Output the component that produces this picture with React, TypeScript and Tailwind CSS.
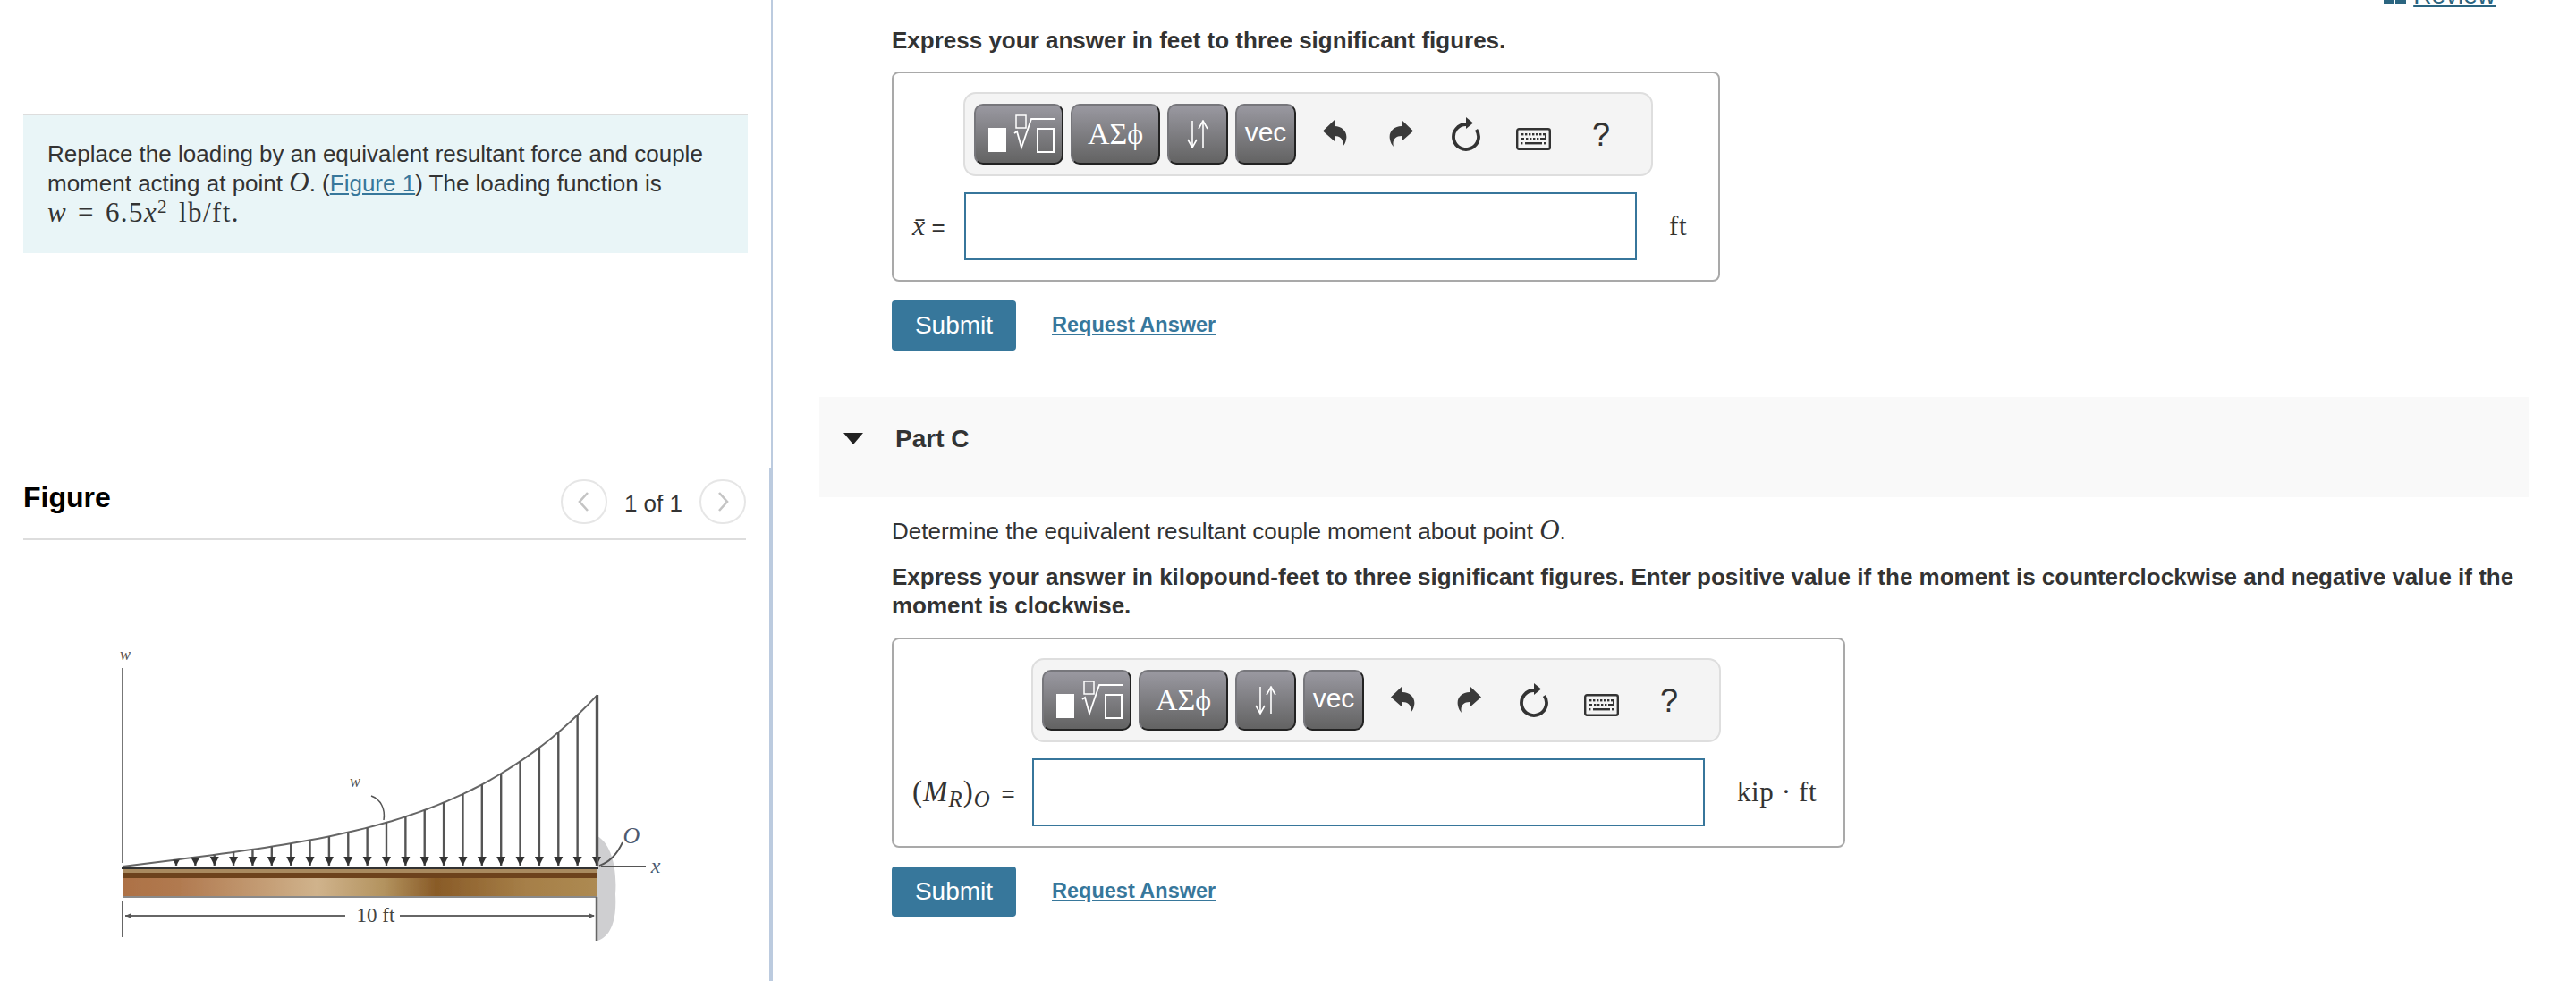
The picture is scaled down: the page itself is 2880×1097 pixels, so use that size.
const ARROW_XS = Array.from({ length: 23 }, (_, i) => 197 + i * (470 / 22));

const curveY = (x: number) => {
  const f = (x - 137) / 531;
  return 969 - 192 * (0.35 * f + 0.65 * Math.pow(f, 4));
};

const CURVE = Array.from({ length: 54 }, (_, i) => {
  const x = 137 + i * (531 / 53);
  return `${x.toFixed(1)},${curveY(x).toFixed(1)}`;
}).join(" ");

function BeamFigure() {
  return (
    <svg width="860" height="493" viewBox="0 604 860 493" className="block">
      <defs>
        <filter id="soft">
          <feGaussianBlur stdDeviation="0.7" />
        </filter>
        <linearGradient id="beam" x1="0" x2="1" y1="0" y2="0">
          <stop offset="0" stopColor="#ad7145" />
          <stop offset="0.12" stopColor="#b17a50" />
          <stop offset="0.41" stopColor="#d0b38c" />
          <stop offset="0.55" stopColor="#b3935f" />
          <stop offset="0.66" stopColor="#895b27" />
          <stop offset="0.85" stopColor="#a67f48" />
          <stop offset="1" stopColor="#ad8a52" />
        </linearGradient>
      </defs>
      <g filter="url(#soft)">
        {/* wall */}
        <path d="M668,935 C685,945 690,975 688,1000 C690,1030 682,1048 668,1052 Z" fill="#cfcfd1" />
        {/* beam */}
        <rect x="137" y="972" width="531" height="31" fill="url(#beam)" />
        <rect x="137" y="972" width="531" height="4" fill="#a98a5e" />
        <rect x="137" y="976" width="531" height="6" fill="#6d421a" />
        <rect x="137" y="1002" width="531" height="2" fill="#8a8a8a" />
        <rect x="136" y="969" width="533" height="3" fill="#333333" />
        {/* load */}
        <polyline points={CURVE} fill="none" stroke="#666666" strokeWidth="2" />
        {ARROW_XS.map((x) => {
          const top = curveY(x);
          const headTop = Math.max(958, top);
          const half = Math.min(5, (969 - headTop) / 2);
          return (
            <g key={x}>
              <line x1={x} x2={x} y1={top} y2={968} stroke="#555555" strokeWidth="2.4" />
              <polygon points={`${x - half},${headTop} ${x + half},${headTop} ${x},968`} fill="#333333" />
            </g>
          );
        })}
        <line x1="668" x2="668" y1="777" y2="968" stroke="#555555" strokeWidth="2.4" />
        {/* axes and dimension */}
        <line x1="137" x2="137" y1="747" y2="965" stroke="#777777" strokeWidth="2" />
        <line x1="672" x2="722" y1="969" y2="969" stroke="#555555" strokeWidth="2" />
        <line x1="667" x2="667" y1="1003" y2="1052" stroke="#666666" strokeWidth="2.5" />
        <line x1="137" x2="137" y1="1008" y2="1048" stroke="#666666" strokeWidth="2" />
        <line x1="140" x2="386" y1="1024" y2="1024" stroke="#666666" strokeWidth="2" />
        <line x1="447" x2="664" y1="1024" y2="1024" stroke="#666666" strokeWidth="2" />
        <polygon points="140,1024 147,1021 147,1027" fill="#555555" />
        <polygon points="665,1024 658,1021 658,1027" fill="#555555" />
        <path d="M415,890 C426,894 431,905 429,917" fill="none" stroke="#555555" strokeWidth="1.5" />
        <path d="M670,968 C682,964 690,955 696,942" fill="none" stroke="#555555" strokeWidth="1.8" />
      </g>
      <g fontFamily="'Liberation Serif', serif" fill="#555555">
        <text x="140" y="738" fontSize="18" fontStyle="italic" textAnchor="middle">w</text>
        <text x="397" y="880" fontSize="18" fontStyle="italic" textAnchor="middle">w</text>
        <text x="706" y="943" fontSize="26" fontStyle="italic" textAnchor="middle" fill="#4d5a70">O</text>
        <text x="733" y="976" fontSize="24" fontStyle="italic" textAnchor="middle" fill="#4d5a70">x</text>
        <text x="420" y="1031" fontSize="23" textAnchor="middle" fill="#444444">10 ft</text>
      </g>
    </svg>
  );
}

function ToolButton({ className, children }: { className: string; children: React.ReactNode }) {
  return (
    <div
      className={`${className} h-[68px] flex items-center justify-center rounded-[10px] border-2 border-[#77777c] border-r-[#222222] border-b-[#222222] bg-gradient-to-b from-[#9a99a1] to-[#636363] text-white`}
    >
      {children}
    </div>
  );
}

function TemplateGlyph() {
  return (
    <svg width="96" height="64" viewBox="2 2 96 64">
      <rect x="16" y="27" width="20" height="27" fill="#ffffff" />
      <rect x="47" y="13" width="11" height="14" fill="none" stroke="#ffffff" strokeWidth="1.5" />
      <path d="M45,33 L48,31 L53,49 L64,17 L90,17" fill="none" stroke="#ffffff" strokeWidth="1.8" />
      <rect x="71" y="28" width="18" height="26" fill="none" stroke="#ffffff" strokeWidth="2" />
    </svg>
  );
}

function UpDownGlyph() {
  return (
    <svg width="32" height="32" viewBox="0 0 32 32">
      <path d="M10,1 L10,30 M5,22 L10,31 L15,22" fill="none" stroke="#ffffff" strokeWidth="1.6" />
      <path d="M22,31 L22,2 M17,10 L22,1 L27,10" fill="none" stroke="#ffffff" strokeWidth="1.6" />
    </svg>
  );
}

function UndoIcon({ flip }: { flip?: boolean }) {
  return (
    <svg width="27" height="30" viewBox="0 0 27 30" className={flip ? "-scale-x-100 -mt-[2px]" : "-mt-[2px]"}>
      <path d="M0,12.5 L13,0 L13,7 C22,7 28,14 26,22 C25.5,25 24,28 22,30 C24,23 20,18 13,18 L13,24 Z" fill="#3a3a3a" />
    </svg>
  );
}

function ResetIcon() {
  return (
    <svg width="34" height="38" viewBox="0 0 34 38">
      <path d="M16,8 A14,14 0 1 0 27.5,14" fill="none" stroke="#333333" strokeWidth="3.8" />
      <polygon points="16,0 24,6.5 16,13" fill="#333333" />
    </svg>
  );
}

function KeyboardIcon() {
  const topRow = [6, 10, 14, 18, 22, 26, 30];
  const midRow = [11, 15, 19, 23];
  return (
    <svg width="39" height="25" viewBox="0 0 39 25" className="mt-[10px]">
      <rect x="1.2" y="1.2" width="36.6" height="22.6" rx="2" fill="none" stroke="#333333" strokeWidth="2.4" />
      {topRow.map((x) => (
        <rect key={x} x={x} y="6" width="2.4" height="2.4" fill="#333333" />
      ))}
      {midRow.map((x) => (
        <rect key={x} x={x} y="11" width="2.4" height="2.4" fill="#333333" />
      ))}
      <rect x="5" y="11" width="4" height="2.4" fill="#333333" />
      <path d="M27,12 L33,12 L33,6" fill="none" stroke="#333333" strokeWidth="2" />
      <rect x="5" y="16" width="2.4" height="2.4" fill="#333333" />
      <rect x="10" y="16" width="19" height="2.4" fill="#333333" />
      <rect x="31" y="16" width="2.4" height="2.4" fill="#333333" />
    </svg>
  );
}

function Toolbar({ className }: { className: string }) {
  return (
    <div
      className={`${className} w-[771px] h-[94px] flex items-center pl-[10px] rounded-[14px] border-2 border-[#dedede] bg-[#f4f4f4]`}
    >
      <div className="flex gap-[8px]">
        <ToolButton className="w-[100px]">
          <TemplateGlyph />
        </ToolButton>
        <ToolButton className="w-[100px] font-['Liberation_Serif',serif] text-[34px]">ΑΣϕ</ToolButton>
        <ToolButton className="w-[68px]">
          <UpDownGlyph />
        </ToolButton>
        <ToolButton className="w-[68px] text-[30px] pb-[5px]">vec</ToolButton>
      </div>
      <div className="flex items-center ml-[6px]">
        <div className="w-[74px] flex items-center justify-center">
          <UndoIcon />
        </div>
        <div className="w-[74px] flex items-center justify-center">
          <UndoIcon flip />
        </div>
        <div className="w-[74px] flex items-center justify-center">
          <ResetIcon />
        </div>
        <div className="w-[74px] flex items-center justify-center">
          <KeyboardIcon />
        </div>
        <div className="w-[74px] flex items-center justify-center pl-[4px] pt-[2px] text-[36px] leading-[40px] text-[#333333]">
          ?
        </div>
      </div>
    </div>
  );
}

function AnswerBox({
  boxWidth,
  toolbarOffset,
  labelWidth,
  label,
  unit,
}: {
  boxWidth: string;
  toolbarOffset: string;
  labelWidth: string;
  label: React.ReactNode;
  unit: string;
}) {
  return (
    <div className={`${boxWidth} h-[235px] rounded-[8px] border-2 border-[#a9a9a9] pt-[21px]`}>
      <Toolbar className={toolbarOffset} />
      <div className="flex items-center mt-[18px] pl-[21px]">
        <div className={`${labelWidth} shrink-0 whitespace-nowrap`}>{label}</div>
        <div className="w-[752px] h-[76px] shrink-0 border-2 border-[#37769b] bg-white" />
        <div className="ml-[36px] font-['Liberation_Serif',serif] text-[31px] tracking-[0.6px] whitespace-nowrap">
          {unit}
        </div>
      </div>
    </div>
  );
}

function SubmitRow() {
  return (
    <div className="flex items-center mt-[21px]">
      <div className="w-[139px] h-[56px] flex items-center justify-center rounded-[4px] bg-[#37779b] text-[28px] text-white">
        Submit
      </div>
      <a className="ml-[40px] pb-[2px] font-bold text-[23.5px] text-[#37779b] underline">Request Answer</a>
    </div>
  );
}

function NavCircle({ points }: { points: string }) {
  return (
    <div className="w-[52px] h-[50px] flex items-center justify-center rounded-full border-2 border-[#e6e6e6]">
      <svg width="16" height="24" viewBox="0 0 16 24">
        <polyline points={points} fill="none" stroke="#c4c4c4" strokeWidth="2.6" />
      </svg>
    </div>
  );
}

export default function App() {
  return (
    <div className="flex w-[2880px] h-[1097px] overflow-hidden bg-white font-['Liberation_Sans',sans-serif] text-[26px] leading-[32px] text-[#333333]">
      {/* Left column */}
      <div className="w-[860px] shrink-0">
        <div className="ml-[26px] mt-[127px] w-[810px] h-[156px] border-t-2 border-[#dddddd] bg-[#e9f5f7] pl-[27px] pt-[27px]">
          <p>
            Replace the loading by an equivalent resultant force and couple
            <br />
            moment acting at point <i className="font-['Liberation_Serif',serif] text-[31px]">O</i>. (
            <a className="text-[#37779b] underline">Figure 1</a>) The loading function is
          </p>
          <p className="mt-[1px] font-['Liberation_Serif',serif] text-[31px] tracking-[1.4px] whitespace-nowrap">
            <i>w</i>
            <span className="mx-[12px]">=</span>6.5<i>x</i>
            <sup className="text-[21px]">2</sup>
            <span className="ml-[12px]">lb/ft.</span>
          </p>
        </div>

        <div className="ml-[26px] mt-[253px] w-[808px] h-[68px] flex border-b-2 border-[#dddddd]">
          <h2 className="mt-[2px] font-bold text-[32px] leading-[36px] text-black">Figure</h2>
          <div className="ml-auto flex items-start">
            <NavCircle points="12,2 3,12 12,22" />
            <span className="mx-[19px] mt-[11px]">1 of 1</span>
            <NavCircle points="4,2 13,12 4,22" />
          </div>
        </div>

        <BeamFigure />
      </div>

      {/* Divider */}
      <div className="w-[4px] shrink-0 flex flex-col items-end">
        <div className="w-[2px] h-[523px] bg-[#bccbdf]" />
        <div className="w-[4px] flex-1 bg-[#bccbdf]" />
      </div>

      {/* Right column */}
      <div className="flex-1 min-w-0">
        <div className="-mt-[21px] h-[32px] pr-[90px] flex justify-end items-start text-[28px]">
          <svg width="25" height="26" viewBox="0 0 25 26" className="mr-[8px]">
            <rect x="0" y="0" width="25" height="25" fill="#2b6580" />
            <rect x="12" y="0" width="1" height="25" fill="#ffffff" />
          </svg>
          <a className="text-[#2a6480] underline">Review</a>
        </div>

        <div className="ml-[133px]">
          <p className="mt-[18px] font-bold">Express your answer in feet to three significant figures.</p>
          <div className="mt-[19px]">
            <AnswerBox
              boxWidth="w-[926px]"
              toolbarOffset="ml-[78px]"
              labelWidth="w-[58px]"
              unit="ft"
              label={
                <span>
                  <i className="font-['Liberation_Serif',serif] text-[32px]">x̄</i> =
                </span>
              }
            />
          </div>
          <SubmitRow />
        </div>

        <div className="ml-[52px] mt-[52px] w-[1912px] h-[112px] flex items-start bg-[#f9f9f9] pt-[31px] text-[28px]">
          <svg width="22" height="13" viewBox="0 0 22 13" className="ml-[27px] mt-[9px]">
            <polygon points="0,0 22,0 11,13" fill="#222222" />
          </svg>
          <span className="ml-[36px] font-bold">Part C</span>
        </div>

        <div className="ml-[133px] mr-[52px]">
          <p className="mt-[21px]">
            Determine the equivalent resultant couple moment about point{" "}
            <i className="font-['Liberation_Serif',serif] text-[31px]">O</i>.
          </p>
          <p className="mt-[19px] font-bold">
            Express your answer in kilopound-feet to three significant figures. Enter positive value if the moment is
            counterclockwise and negative value if the moment is clockwise.
          </p>
          <div className="mt-[20px]">
            <AnswerBox
              boxWidth="w-[1066px]"
              toolbarOffset="ml-[154px]"
              labelWidth="w-[134px]"
              unit="kip · ft"
              label={
                <span>
                  <span className="font-['Liberation_Serif',serif] text-[33px] tracking-[1px]">
                    (<i>M</i>
                    <sub className="italic">R</sub>)<sub className="italic">O</sub>
                  </span>
                  <span className="ml-[12px]">=</span>
                </span>
              }
            />
          </div>
          <SubmitRow />
        </div>
      </div>
    </div>
  );
}
